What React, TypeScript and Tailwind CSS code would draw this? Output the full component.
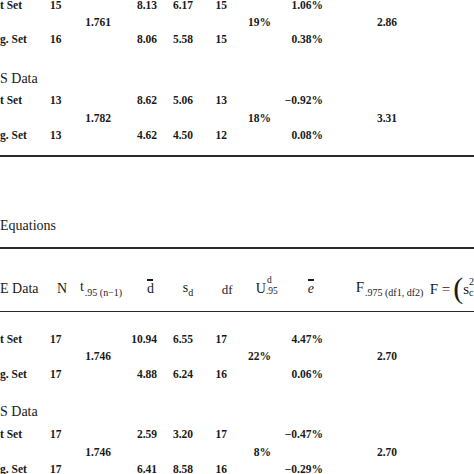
import React from "react";

type R = {
  label?: string;
  n?: string;
  t?: string;
  d?: string;
  sd?: string;
  df?: string;
  u?: string;
  e?: string;
  f?: string;
};

const serif = { fontFamily: '"Liberation Serif", "Times New Roman", serif' };

function Row({ r, h }: { r: R; h: string }) {
  return (
    <div className={`flex items-center ${h} text-[11.5px] font-bold text-[#1a1a1a] leading-none whitespace-nowrap`}>
      <div className="w-[46px]">{r.label ?? ""}</div>
      <div className="w-[22px] pl-[4px]">{r.n ?? ""}</div>
      <div className="w-[43px] text-right">{r.t ?? ""}</div>
      <div className="w-[46px] text-right">{r.d ?? ""}</div>
      <div className="w-[36px] text-right">{r.sd ?? ""}</div>
      <div className="w-[34px] text-right">{r.df ?? ""}</div>
      <div className="w-[44px] text-right">{r.u ?? ""}</div>
      <div className="w-[52px] text-right">{r.e ?? ""}</div>
      <div className="w-[74px] text-right">{r.f ?? ""}</div>
    </div>
  );
}

function Group({ rows, h, mt }: { rows: R[]; h: string; mt: string }) {
  return (
    <div className={`flex flex-col shrink-0 ${mt}`}>
      {rows.map((r, i) => (
        <Row key={i} r={r} h={h} />
      ))}
    </div>
  );
}

function Bar({ children, italic }: { children: React.ReactNode; italic?: boolean }) {
  return (
    <span className="inline-flex flex-col items-center leading-none">
      <span className="block w-[6px] h-[2px] bg-[#1a1a1a] mb-[1px]" />
      <span className={italic ? "italic" : ""}>{children}</span>
    </span>
  );
}

export default function App() {
  return (
    <div
      className="w-[474px] h-[474px] overflow-hidden bg-white text-[#1a1a1a] flex flex-col"
      style={serif}
    >
      <Group
        mt="-mt-[3px]"
        h="h-[17px]"
        rows={[
          { label: "t Set", n: "15", d: "8.13", sd: "6.17", df: "15", e: "1.06%" },
          { t: "1.761", u: "19%", f: "2.86" },
          { label: "g. Set", n: "16", d: "8.06", sd: "5.58", df: "15", e: "0.38%" },
        ]}
      />
      <div className="mt-[22px] h-[18px] flex items-center text-[14px] leading-none shrink-0">S Data</div>
      <Group
        mt="mt-[4px]"
        h="h-[17.5px]"
        rows={[
          { label: "t Set", n: "13", d: "8.62", sd: "5.06", df: "13", e: "\u22120.92%" },
          { t: "1.782", u: "18%", f: "3.31" },
          { label: "g. Set", n: "13", d: "4.62", sd: "4.50", df: "12", e: "0.08%" },
        ]}
      />
      <div className="mt-[10.5px] h-[2px] w-full bg-[#2a2a2a] shrink-0" />
      <div className="mt-[59px] h-[20px] flex items-center text-[14px] leading-none shrink-0">Equations</div>
      <div className="mt-[11px] h-[1.5px] w-full bg-[#2a2a2a] shrink-0" />

      <div className="mt-[30.5px] h-[20px] flex items-center whitespace-nowrap leading-none text-[13px] shrink-0">
        <div className="w-[57px] text-[14px]">E Data</div>
        <div className="w-[23px] text-[14px]">N</div>
        <div className="w-[67px] flex items-start">
          <span className="text-[14px]">t</span>
          <span className="text-[10px] mt-[8px] ml-[1px]">.95 (n&minus;1)</span>
        </div>
        <div className="w-[36px] flex -mt-[3px] text-[14px]">
          <Bar>d</Bar>
        </div>
        <div className="w-[39px] flex items-start text-[14px]">
          <span>s</span>
          <span className="text-[10px] mt-[7px]">d</span>
        </div>
        <div className="w-[34px] text-[13px]">df</div>
        <div className="w-[52px] flex items-center">
          <span className="text-[14px]">U</span>
          <span className="flex flex-col text-[9.5px] leading-none ml-[1px]">
            <span className="-mt-[6px]">d</span>
            <span className="mt-[2px] -ml-[1px]">.95</span>
          </span>
        </div>
        <div className="w-[48px] flex -mt-[3px] text-[14px]">
          <Bar italic>e</Bar>
        </div>
        <div className="w-[74px] flex items-start">
          <span className="text-[15px]">F</span>
          <span className="text-[10px] mt-[8px] ml-[1px]">.975 (df1, df2)</span>
        </div>
        <div className="flex items-center">
          <span className="text-[15px]">F =</span>
          <span className="text-[30px] font-light leading-none ml-[3px] -mt-[2px]">(</span>
          <span className="text-[15px]">s</span>
          <span className="flex flex-col text-[10px] leading-none">
            <span className="-mt-[4px]">2</span>
            <span className="mt-[1px]">c</span>
          </span>
        </div>
      </div>

      <div className="mt-[11.5px] h-[1.5px] w-full bg-[#2a2a2a] shrink-0" />
      <Group
        mt="mt-[18.5px]"
        h="h-[17.5px]"
        rows={[
          { label: "t Set", n: "17", d: "10.94", sd: "6.55", df: "17", e: "4.47%" },
          { t: "1.746", u: "22%", f: "2.70" },
          { label: "g. Set", n: "17", d: "4.88", sd: "6.24", df: "16", e: "0.06%" },
        ]}
      />
      <div className="mt-[20.25px] h-[18px] flex items-center text-[14px] leading-none shrink-0">S Data</div>
      <Group
        mt="mt-[4.75px]"
        h="h-[17.5px]"
        rows={[
          { label: "t Set", n: "17", d: "2.59", sd: "3.20", df: "17", e: "\u22120.47%" },
          { t: "1.746", u: "8%", f: "2.70" },
          { label: "g. Set", n: "17", d: "6.41", sd: "8.58", df: "16", e: "\u22120.29%" },
        ]}
      />
    </div>
  );
}
